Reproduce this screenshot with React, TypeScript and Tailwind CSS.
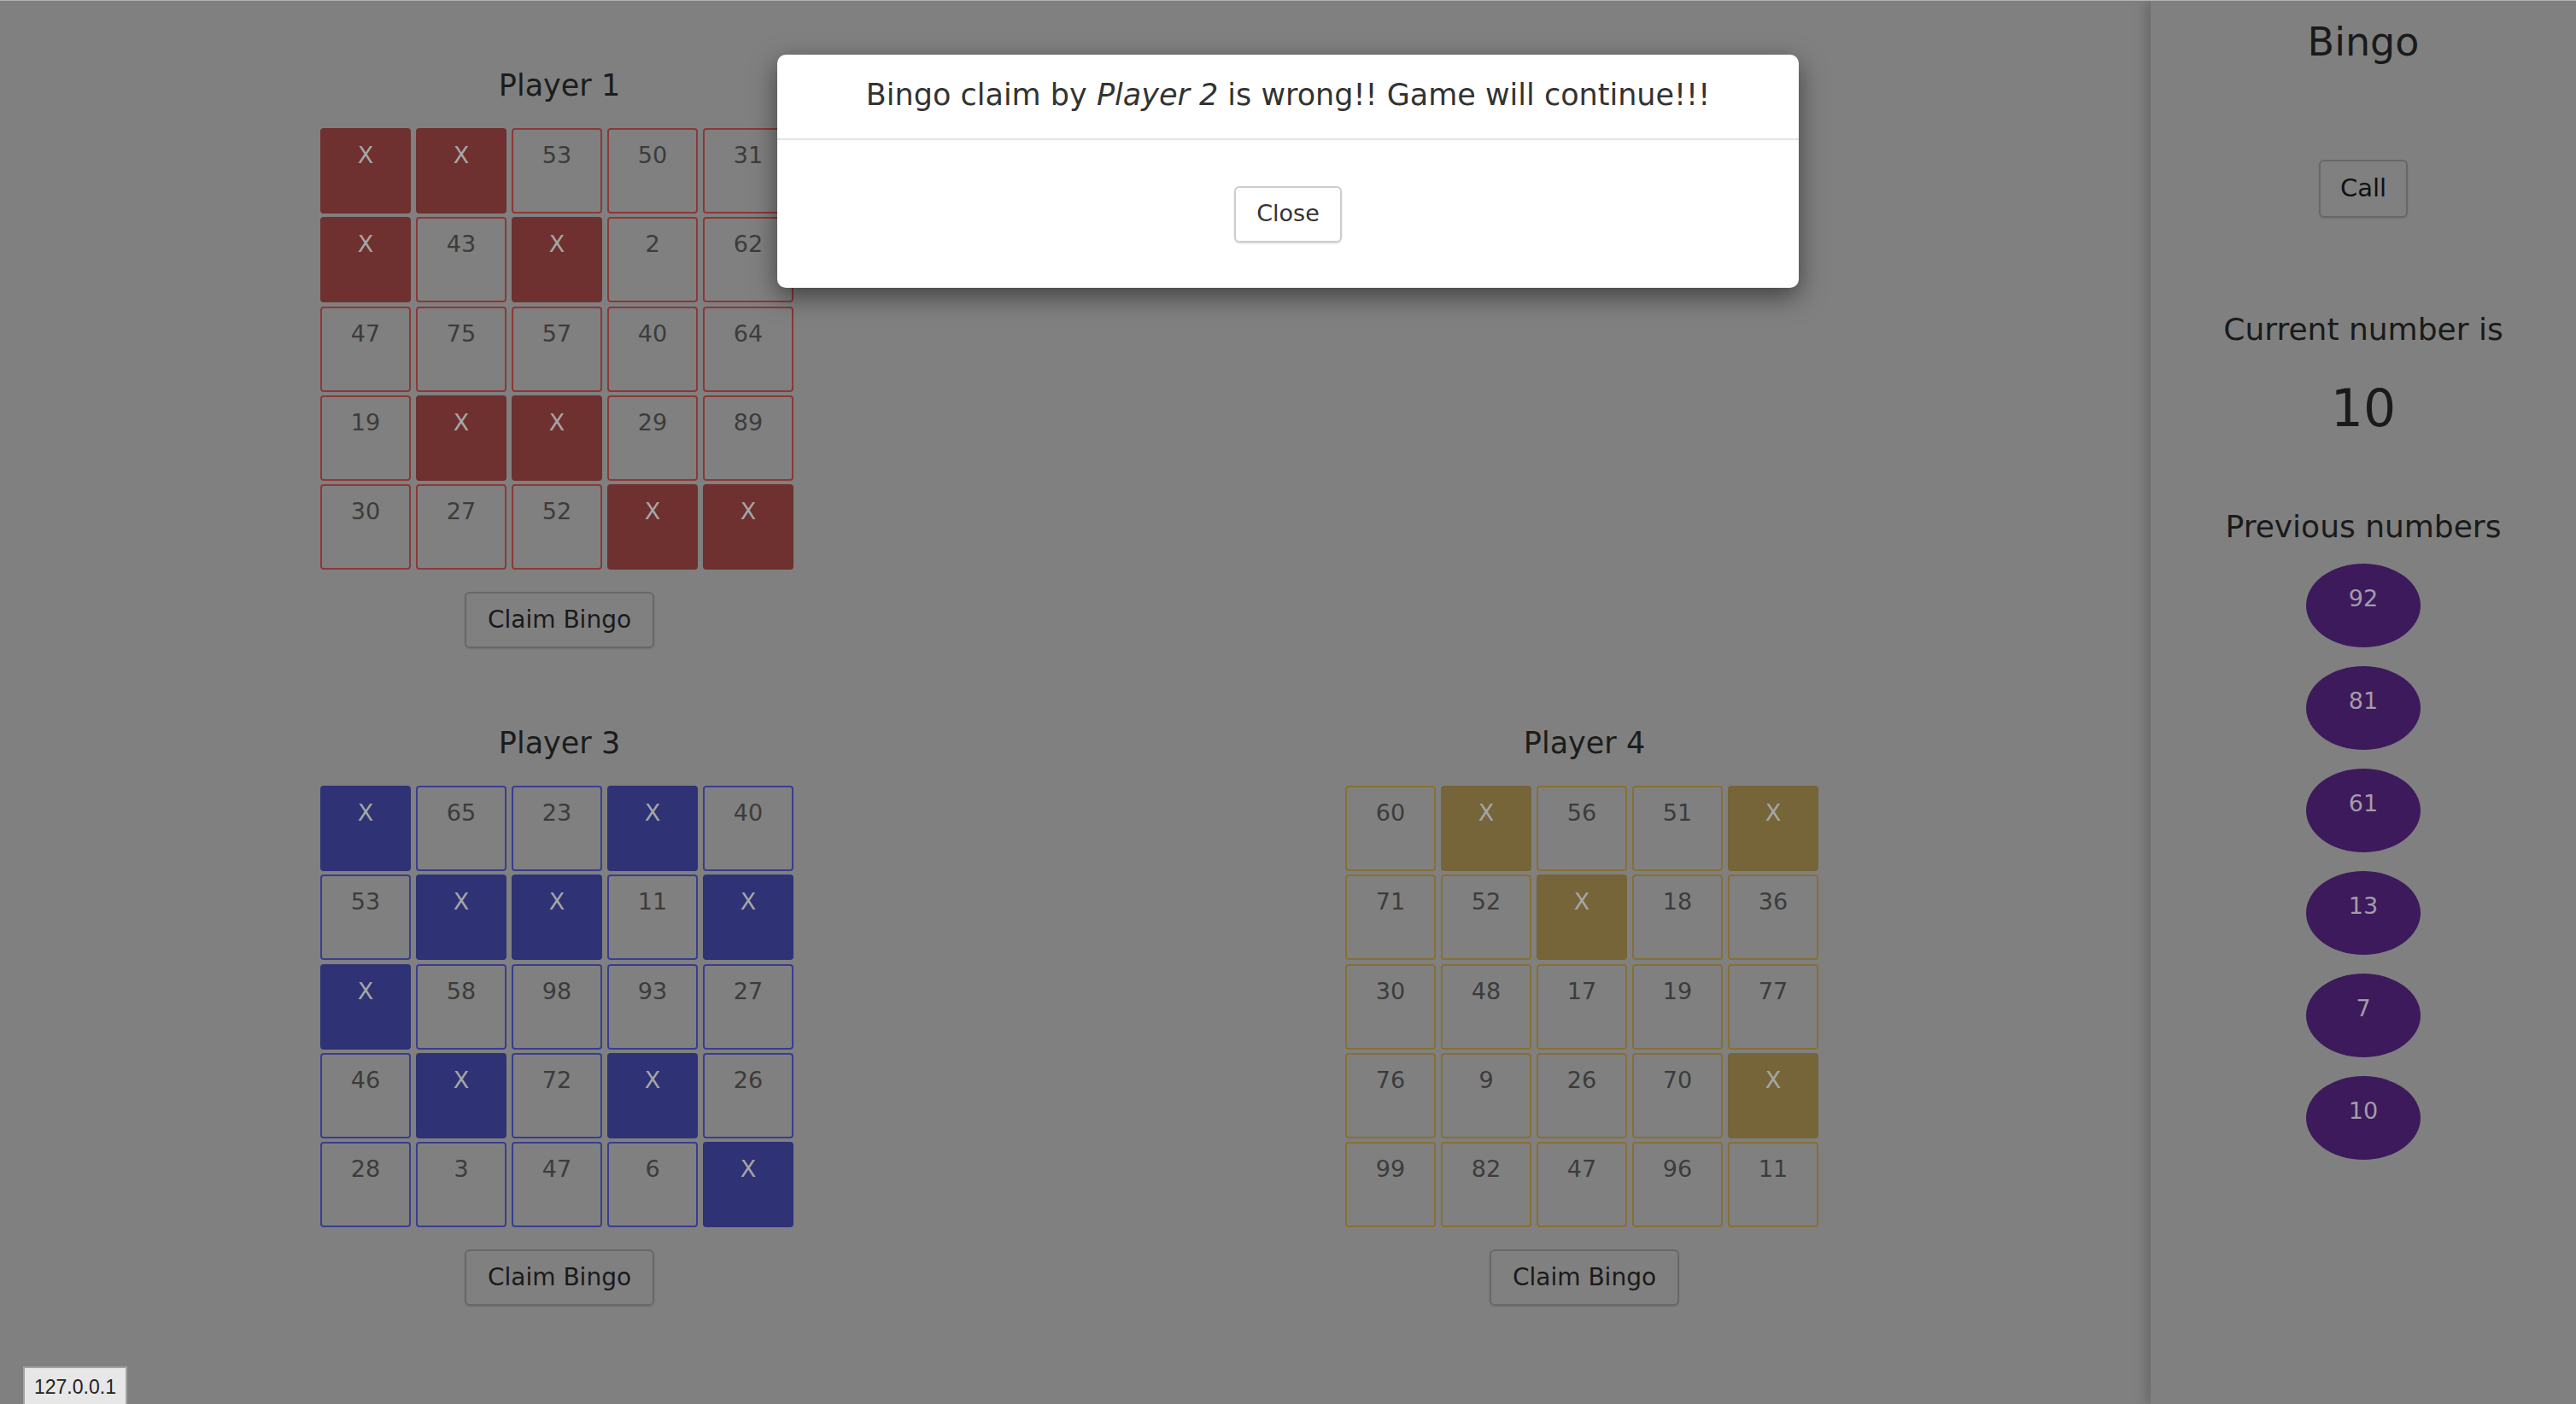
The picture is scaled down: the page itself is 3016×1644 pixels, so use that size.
type Theme = {
  border: string;
  marked: string;
};

const THEMES: Record<string, Theme> = {
  red: { border: "border-[#8c3838]", marked: "bg-[#6f3030] border-[#6f3030]" },
  blue: { border: "border-[#393d90]", marked: "bg-[#2f3275] border-[#2f3275]" },
  gold: { border: "border-[#877036]", marked: "bg-[#766539] border-[#766539]" },
};

interface Player {
  name: string;
  theme: keyof typeof THEMES;
  card: string[][];
}

const PLAYERS: (Player | null)[] = [
  {
    name: "Player 1",
    theme: "red",
    card: [
      ["X", "X", "53", "50", "31"],
      ["X", "43", "X", "2", "62"],
      ["47", "75", "57", "40", "64"],
      ["19", "X", "X", "29", "89"],
      ["30", "27", "52", "X", "X"],
    ],
  },
  null,
  {
    name: "Player 3",
    theme: "blue",
    card: [
      ["X", "65", "23", "X", "40"],
      ["53", "X", "X", "11", "X"],
      ["X", "58", "98", "93", "27"],
      ["46", "X", "72", "X", "26"],
      ["28", "3", "47", "6", "X"],
    ],
  },
  {
    name: "Player 4",
    theme: "gold",
    card: [
      ["60", "X", "56", "51", "X"],
      ["71", "52", "X", "18", "36"],
      ["30", "48", "17", "19", "77"],
      ["76", "9", "26", "70", "X"],
      ["99", "82", "47", "96", "11"],
    ],
  },
];

const PREVIOUS = [92, 81, 61, 13, 7, 10];

function PlayerCard({ player }: { player: Player }) {
  const theme = THEMES[player.theme];
  return (
    <div className="flex h-[770px] flex-col items-center">
      <h2 className="text-[35px] leading-[54px] text-[#1c1c1c]">{player.name}</h2>
      <div className="mt-[23px] grid grid-cols-[repeat(5,106px)] gap-x-[6px] gap-y-[4.25px] pr-[6px]">
        {player.card.flat().map((value, i) => {
          const marked = value === "X";
          return (
            <div
              key={i}
              className={`h-[100px] rounded-[4px] border-2 pt-[10px] text-center text-[27px] leading-[40px] ${
                marked ? `${theme.marked} text-[#a6a6a6]` : `${theme.border} text-[#3c3c3c]`
              }`}
            >
              {value}
            </div>
          );
        })}
      </div>
      <button
        type="button"
        className="mt-[26px] h-[66px] w-[222px] rounded-[6px] border-2 border-[#686868] text-[28px] text-[#1a1a1a] shadow-[0_1px_2px_rgba(0,0,0,0.12)]"
      >
        Claim Bingo
      </button>
    </div>
  );
}

export default function App() {
  return (
    <div className="relative flex h-screen w-full overflow-hidden border-t border-[#b3b3b3] bg-[#808080] font-['DejaVu_Sans','Liberation_Sans',sans-serif]">
      <main className="flex-1 pl-[55px] pt-[72px]">
        <div className="grid grid-cols-[1200px_1200px]">
          {PLAYERS.map((p, i) => (p ? <PlayerCard key={i} player={p} /> : <div key={i} />))}
        </div>
      </main>

      <aside className="flex w-[498px] shrink-0 flex-col items-center pt-[20px] text-[#1a1a1a] shadow-[-5px_0_14px_rgba(0,0,0,0.2)]">
        <h1 className="text-[46px] leading-[56px]">Bingo</h1>
        <button
          type="button"
          className="mt-[110px] h-[68px] w-[104px] rounded-[6px] border-2 border-[#686868] text-[29px] text-[#111] shadow-[0_1px_2px_rgba(0,0,0,0.12)]"
        >
          Call
        </button>
        <div className="mt-[104px] text-[36px] leading-[54px]">Current number is</div>
        <div className="mt-[29px] text-[60px] leading-[72px]">10</div>
        <div className="mt-[76px] text-[36px] leading-[54px]">Previous numbers</div>
        <div className="mt-[16px] flex flex-col items-center gap-[22px]">
          {PREVIOUS.map((n) => (
            <div
              key={n}
              className="h-[98px] w-[134px] rounded-[50%] bg-[#3c1a5b] pt-[21px] text-center text-[27px] leading-[40px] text-[#a39ca9]"
            >
              {n}
            </div>
          ))}
        </div>
      </aside>

      {/* claim result dialog */}
      <div className="absolute left-1/2 top-[63px] w-[1196px] -translate-x-1/2 rounded-[10px] bg-white shadow-[0_10px_30px_rgba(0,0,0,0.5)]">
        <div className="flex h-[100px] items-center justify-center border-b-2 border-[#e5e5e5] pb-[4px] text-[35px] text-[#333]">
          <span>
            Bingo claim by <em className="italic">Player 2</em> is wrong!! Game will continue!!!
          </span>
        </div>
        <div className="flex h-[173px] items-center justify-center">
          <button
            type="button"
            className="h-[66px] w-[126px] rounded-[6px] border-2 border-[#cccccc] text-[27px] text-[#333] shadow-[0_1px_2px_rgba(0,0,0,0.15)]"
          >
            Close
          </button>
        </div>
      </div>

      <div className="absolute bottom-0 left-[27px] h-[44px] w-[122px] border-2 border-b-0 border-[#a3a3a3] bg-[#e7e7e7] pl-[11px] pt-[8px] font-['Liberation_Sans',Arial,sans-serif] text-[23px] leading-[28px] text-[#222]">
        127.0.0.1
      </div>
    </div>
  );
}
